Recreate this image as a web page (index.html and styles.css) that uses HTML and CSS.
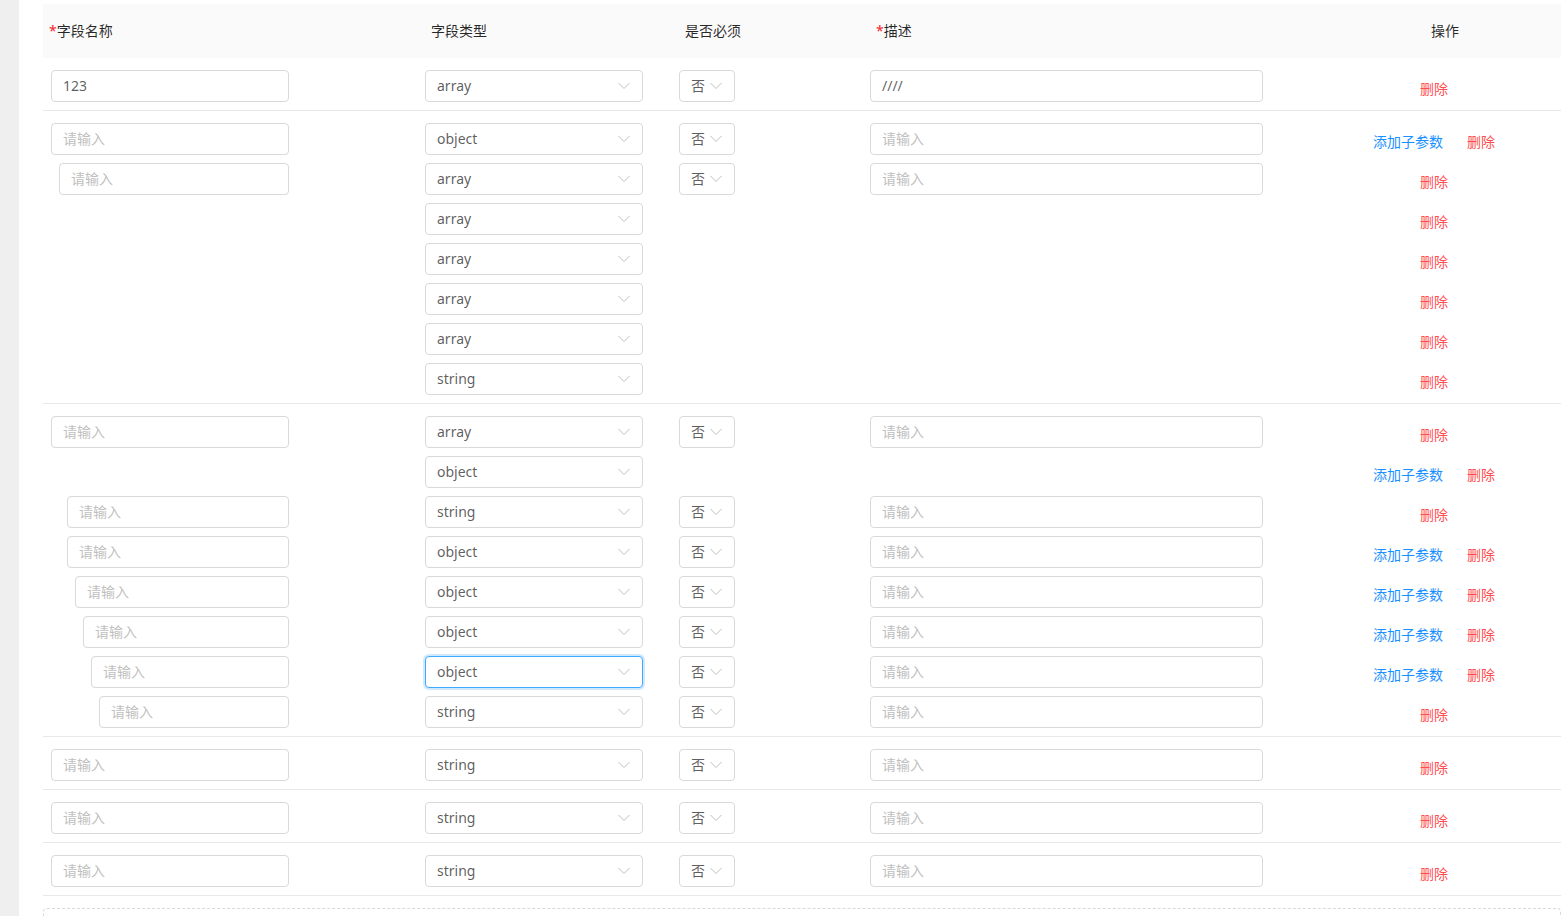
FILE: index.html
```html
<!DOCTYPE html>
<html lang="zh-CN">
<head>
<meta charset="utf-8">
<title>参数编辑</title>
<link rel="stylesheet" href="styles.css">
</head>
<body>
<div class="page">
  <aside class="side"></aside>
  <main class="main">
    <div class="table">
      <div class="thead">
        <div class="th"><span class="req">*</span>字段名称</div>
        <div class="th">字段类型</div>
        <div class="th">是否必须</div>
        <div class="th"><span class="req">*</span>描述</div>
        <div class="th th-ops">操作</div>
      </div>

      <!-- group 1 -->
      <div class="group">
        <div class="line">
          <div class="cell name"><div class="input"><span class="val">123</span></div></div>
          <div class="cell"><div class="select"><span class="val">array</span><svg class="arrow" viewBox="0 0 12 12"><polyline points="0.5,3 6,8.5 11.5,3"/></svg></div></div>
          <div class="cell"><div class="select small"><span class="val">否</span><svg class="arrow" viewBox="0 0 12 12"><polyline points="0.5,3 6,8.5 11.5,3"/></svg></div></div>
          <div class="cell"><div class="input"><span class="val">////</span></div></div>
          <div class="cell ops"><a class="del">删除</a></div>
        </div>
      </div>

      <!-- group 2 -->
      <div class="group">
        <div class="line">
          <div class="cell name"><div class="input"><span class="ph">请输入</span></div></div>
          <div class="cell"><div class="select"><span class="val">object</span><svg class="arrow" viewBox="0 0 12 12"><polyline points="0.5,3 6,8.5 11.5,3"/></svg></div></div>
          <div class="cell"><div class="select small"><span class="val">否</span><svg class="arrow" viewBox="0 0 12 12"><polyline points="0.5,3 6,8.5 11.5,3"/></svg></div></div>
          <div class="cell"><div class="input"><span class="ph">请输入</span></div></div>
          <div class="cell ops"><a class="add">添加子参数</a><a class="del">删除</a></div>
        </div>
        <div class="line">
          <div class="cell name"><div class="input lv1"><span class="ph">请输入</span></div></div>
          <div class="cell"><div class="select"><span class="val">array</span><svg class="arrow" viewBox="0 0 12 12"><polyline points="0.5,3 6,8.5 11.5,3"/></svg></div></div>
          <div class="cell"><div class="select small"><span class="val">否</span><svg class="arrow" viewBox="0 0 12 12"><polyline points="0.5,3 6,8.5 11.5,3"/></svg></div></div>
          <div class="cell"><div class="input"><span class="ph">请输入</span></div></div>
          <div class="cell ops"><a class="del">删除</a></div>
        </div>
        <div class="line">
          <div class="cell name"></div>
          <div class="cell"><div class="select"><span class="val">array</span><svg class="arrow" viewBox="0 0 12 12"><polyline points="0.5,3 6,8.5 11.5,3"/></svg></div></div>
          <div class="cell"></div>
          <div class="cell"></div>
          <div class="cell ops"><a class="del">删除</a></div>
        </div>
        <div class="line">
          <div class="cell name"></div>
          <div class="cell"><div class="select"><span class="val">array</span><svg class="arrow" viewBox="0 0 12 12"><polyline points="0.5,3 6,8.5 11.5,3"/></svg></div></div>
          <div class="cell"></div>
          <div class="cell"></div>
          <div class="cell ops"><a class="del">删除</a></div>
        </div>
        <div class="line">
          <div class="cell name"></div>
          <div class="cell"><div class="select"><span class="val">array</span><svg class="arrow" viewBox="0 0 12 12"><polyline points="0.5,3 6,8.5 11.5,3"/></svg></div></div>
          <div class="cell"></div>
          <div class="cell"></div>
          <div class="cell ops"><a class="del">删除</a></div>
        </div>
        <div class="line">
          <div class="cell name"></div>
          <div class="cell"><div class="select"><span class="val">array</span><svg class="arrow" viewBox="0 0 12 12"><polyline points="0.5,3 6,8.5 11.5,3"/></svg></div></div>
          <div class="cell"></div>
          <div class="cell"></div>
          <div class="cell ops"><a class="del">删除</a></div>
        </div>
        <div class="line">
          <div class="cell name"></div>
          <div class="cell"><div class="select"><span class="val">string</span><svg class="arrow" viewBox="0 0 12 12"><polyline points="0.5,3 6,8.5 11.5,3"/></svg></div></div>
          <div class="cell"></div>
          <div class="cell"></div>
          <div class="cell ops"><a class="del">删除</a></div>
        </div>
      </div>

      <!-- group 3 -->
      <div class="group">
        <div class="line">
          <div class="cell name"><div class="input"><span class="ph">请输入</span></div></div>
          <div class="cell"><div class="select"><span class="val">array</span><svg class="arrow" viewBox="0 0 12 12"><polyline points="0.5,3 6,8.5 11.5,3"/></svg></div></div>
          <div class="cell"><div class="select small"><span class="val">否</span><svg class="arrow" viewBox="0 0 12 12"><polyline points="0.5,3 6,8.5 11.5,3"/></svg></div></div>
          <div class="cell"><div class="input"><span class="ph">请输入</span></div></div>
          <div class="cell ops"><a class="del">删除</a></div>
        </div>
        <div class="line">
          <div class="cell name"></div>
          <div class="cell"><div class="select"><span class="val">object</span><svg class="arrow" viewBox="0 0 12 12"><polyline points="0.5,3 6,8.5 11.5,3"/></svg></div></div>
          <div class="cell"></div>
          <div class="cell"></div>
          <div class="cell ops"><a class="add">添加子参数</a><a class="del">删除</a></div>
        </div>
        <div class="line">
          <div class="cell name"><div class="input lv2"><span class="ph">请输入</span></div></div>
          <div class="cell"><div class="select"><span class="val">string</span><svg class="arrow" viewBox="0 0 12 12"><polyline points="0.5,3 6,8.5 11.5,3"/></svg></div></div>
          <div class="cell"><div class="select small"><span class="val">否</span><svg class="arrow" viewBox="0 0 12 12"><polyline points="0.5,3 6,8.5 11.5,3"/></svg></div></div>
          <div class="cell"><div class="input"><span class="ph">请输入</span></div></div>
          <div class="cell ops"><a class="del">删除</a></div>
        </div>
        <div class="line">
          <div class="cell name"><div class="input lv2"><span class="ph">请输入</span></div></div>
          <div class="cell"><div class="select"><span class="val">object</span><svg class="arrow" viewBox="0 0 12 12"><polyline points="0.5,3 6,8.5 11.5,3"/></svg></div></div>
          <div class="cell"><div class="select small"><span class="val">否</span><svg class="arrow" viewBox="0 0 12 12"><polyline points="0.5,3 6,8.5 11.5,3"/></svg></div></div>
          <div class="cell"><div class="input"><span class="ph">请输入</span></div></div>
          <div class="cell ops"><a class="add">添加子参数</a><a class="del">删除</a></div>
        </div>
        <div class="line">
          <div class="cell name"><div class="input lv3"><span class="ph">请输入</span></div></div>
          <div class="cell"><div class="select"><span class="val">object</span><svg class="arrow" viewBox="0 0 12 12"><polyline points="0.5,3 6,8.5 11.5,3"/></svg></div></div>
          <div class="cell"><div class="select small"><span class="val">否</span><svg class="arrow" viewBox="0 0 12 12"><polyline points="0.5,3 6,8.5 11.5,3"/></svg></div></div>
          <div class="cell"><div class="input"><span class="ph">请输入</span></div></div>
          <div class="cell ops"><a class="add">添加子参数</a><a class="del">删除</a></div>
        </div>
        <div class="line">
          <div class="cell name"><div class="input lv4"><span class="ph">请输入</span></div></div>
          <div class="cell"><div class="select"><span class="val">object</span><svg class="arrow" viewBox="0 0 12 12"><polyline points="0.5,3 6,8.5 11.5,3"/></svg></div></div>
          <div class="cell"><div class="select small"><span class="val">否</span><svg class="arrow" viewBox="0 0 12 12"><polyline points="0.5,3 6,8.5 11.5,3"/></svg></div></div>
          <div class="cell"><div class="input"><span class="ph">请输入</span></div></div>
          <div class="cell ops"><a class="add">添加子参数</a><a class="del">删除</a></div>
        </div>
        <div class="line">
          <div class="cell name"><div class="input lv5"><span class="ph">请输入</span></div></div>
          <div class="cell"><div class="select focused"><span class="val">object</span><svg class="arrow" viewBox="0 0 12 12"><polyline points="0.5,3 6,8.5 11.5,3"/></svg></div></div>
          <div class="cell"><div class="select small"><span class="val">否</span><svg class="arrow" viewBox="0 0 12 12"><polyline points="0.5,3 6,8.5 11.5,3"/></svg></div></div>
          <div class="cell"><div class="input"><span class="ph">请输入</span></div></div>
          <div class="cell ops"><a class="add">添加子参数</a><a class="del">删除</a></div>
        </div>
        <div class="line">
          <div class="cell name"><div class="input lv6"><span class="ph">请输入</span></div></div>
          <div class="cell"><div class="select"><span class="val">string</span><svg class="arrow" viewBox="0 0 12 12"><polyline points="0.5,3 6,8.5 11.5,3"/></svg></div></div>
          <div class="cell"><div class="select small"><span class="val">否</span><svg class="arrow" viewBox="0 0 12 12"><polyline points="0.5,3 6,8.5 11.5,3"/></svg></div></div>
          <div class="cell"><div class="input"><span class="ph">请输入</span></div></div>
          <div class="cell ops"><a class="del">删除</a></div>
        </div>
      </div>

      <!-- group 4 -->
      <div class="group">
        <div class="line">
          <div class="cell name"><div class="input"><span class="ph">请输入</span></div></div>
          <div class="cell"><div class="select"><span class="val">string</span><svg class="arrow" viewBox="0 0 12 12"><polyline points="0.5,3 6,8.5 11.5,3"/></svg></div></div>
          <div class="cell"><div class="select small"><span class="val">否</span><svg class="arrow" viewBox="0 0 12 12"><polyline points="0.5,3 6,8.5 11.5,3"/></svg></div></div>
          <div class="cell"><div class="input"><span class="ph">请输入</span></div></div>
          <div class="cell ops"><a class="del">删除</a></div>
        </div>
      </div>

      <!-- group 5 -->
      <div class="group">
        <div class="line">
          <div class="cell name"><div class="input"><span class="ph">请输入</span></div></div>
          <div class="cell"><div class="select"><span class="val">string</span><svg class="arrow" viewBox="0 0 12 12"><polyline points="0.5,3 6,8.5 11.5,3"/></svg></div></div>
          <div class="cell"><div class="select small"><span class="val">否</span><svg class="arrow" viewBox="0 0 12 12"><polyline points="0.5,3 6,8.5 11.5,3"/></svg></div></div>
          <div class="cell"><div class="input"><span class="ph">请输入</span></div></div>
          <div class="cell ops"><a class="del">删除</a></div>
        </div>
      </div>

      <!-- group 6 -->
      <div class="group">
        <div class="line">
          <div class="cell name"><div class="input"><span class="ph">请输入</span></div></div>
          <div class="cell"><div class="select"><span class="val">string</span><svg class="arrow" viewBox="0 0 12 12"><polyline points="0.5,3 6,8.5 11.5,3"/></svg></div></div>
          <div class="cell"><div class="select small"><span class="val">否</span><svg class="arrow" viewBox="0 0 12 12"><polyline points="0.5,3 6,8.5 11.5,3"/></svg></div></div>
          <div class="cell"><div class="input"><span class="ph">请输入</span></div></div>
          <div class="cell ops"><a class="del">删除</a></div>
        </div>
      </div>
    </div>
    <div class="add-box"></div>
  </main>
</div>
</body>
</html>
```

FILE: styles.css
```css
html, body {
  margin: 0;
  padding: 0;
  background: #fff;
  overflow: hidden;
}
body {
  font-family: "Noto Sans", "Noto Sans CJK SC", sans-serif;
  font-size: 14px;
  line-height: 22px;
  color: rgba(0, 0, 0, 0.65);
}
.page {
  display: flex;
  min-height: 916px;
}
.side {
  width: 19px;
  flex: none;
  background: #efefef;
}
.main {
  flex: 1;
  padding: 4px 0 0 24px;
  min-width: 0;
}
.thead,
.line {
  display: grid;
  grid-template-columns: 382px 254px 191px 393px 1fr;
}
.thead {
  height: 54px;
  align-items: center;
  background: #fafafa;
  color: rgba(0, 0, 0, 0.85);
}
.th {
  padding-left: 6px;
}
.th-ops {
  padding-left: 168px;
}
.req {
  color: #f5222d;
}
.group {
  display: flex;
  flex-direction: column;
  gap: 8px;
  padding: 12px 0 8px;
  border-bottom: 1px solid #e8e8e8;
}
.line {
  height: 32px;
}
.cell {
  display: flex;
  min-width: 0;
}
.cell.name {
  padding-left: 8px;
  width: 246px;
  box-sizing: border-box;
}
.input,
.select {
  box-sizing: border-box;
  height: 32px;
  border: 1px solid #d9d9d9;
  border-radius: 4px;
  background: #fff;
  padding: 4px 11px;
  display: flex;
  align-items: center;
  white-space: nowrap;
}
.input {
  flex: 1;
}
.select {
  width: 218px;
  justify-content: space-between;
  padding-right: 12px;
}
.select.small {
  width: 56px;
}
.select.focused {
  border-color: #40a9ff;
  box-shadow: 0 0 0 2px rgba(24, 144, 255, 0.2);
}
.val {
  color: rgba(0, 0, 0, 0.65);
}
.ph {
  color: #bfbfbf;
}
.arrow {
  width: 12px;
  height: 12px;
  flex: none;
}
.arrow polyline {
  fill: none;
  stroke: #bfbfbf;
  stroke-width: 1;
}
.lv1 { margin-left: 8px; }
.lv2 { margin-left: 16px; }
.lv3 { margin-left: 24px; }
.lv4 { margin-left: 32px; }
.lv5 { margin-left: 40px; }
.lv6 { margin-left: 48px; }
.ops {
  justify-content: center;
  padding-left: 44px;
  padding-top: 8px;
  gap: 24px;
  white-space: nowrap;
}
.add {
  color: #1890ff;
  cursor: pointer;
}
.del {
  color: #ff4d4f;
  cursor: pointer;
}
.add-box {
  margin-top: 12px;
  height: 40px;
  border: 1px dashed #d9d9d9;
  border-radius: 4px;
}
```
